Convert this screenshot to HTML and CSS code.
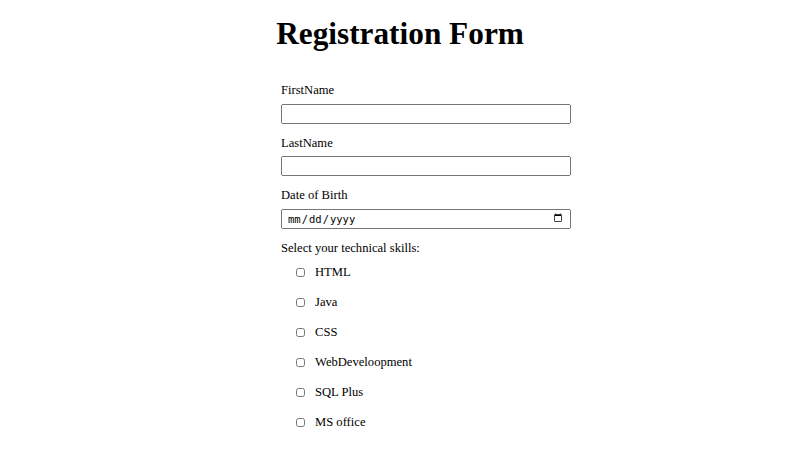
FILE: index.html
```html
<!DOCTYPE html>
<html>
<head>
<meta charset="utf-8">
<title>Registration Form</title>
<link rel="stylesheet" href="styles.css">
</head>
<body>
<h1 class="title">Registration Form</h1>
<form class="form">
  <label class="field-label" for="fn">FirstName</label>
  <input class="field-input" type="text" id="fn">
  <label class="field-label" for="ln">LastName</label>
  <input class="field-input" type="text" id="ln">
  <label class="field-label" for="dob">Date of Birth</label>
  <input class="field-input field-date" type="date" id="dob">
  <p class="skills-title">Select your technical skills:</p>
  <div class="skills">
    <label class="skill"><input type="checkbox" class="skill-box"><span>HTML</span></label>
    <label class="skill"><input type="checkbox" class="skill-box"><span>Java</span></label>
    <label class="skill"><input type="checkbox" class="skill-box"><span>CSS</span></label>
    <label class="skill"><input type="checkbox" class="skill-box"><span>WebDeveloopment</span></label>
    <label class="skill"><input type="checkbox" class="skill-box"><span>SQL Plus</span></label>
    <label class="skill"><input type="checkbox" class="skill-box"><span>MS office</span></label>
  </div>
</form>
</body>
</html>
```
FILE: styles.css
```css
body {
  margin: 0;
  font-family: "Liberation Serif", "Times New Roman", serif;
  font-size: 12.6px;
  line-height: 15px;
  color: #000;
  background: #fff;
}
.title {
  text-align: center;
  font-size: 31.3px;
  line-height: 34px;
  font-weight: bold;
  margin: 17px 0 0;
}
.form {
  display: flex;
  flex-direction: column;
  align-items: flex-start;
  margin: 32px 0 0 281px;
  width: 290px;
}
.field-label {
  display: block;
  margin-bottom: 5.5px;
}
.field-input {
  width: 290px;
  height: 20px;
  box-sizing: border-box;
  margin: 0 0 12px;
  font-size: 10.7px;
  padding: 1px 2px;
}
.field-date {
  font-size: 10.5px;
  padding: 1px 4px;
}
.skills-title {
  margin: 0 0 9px;
}
.skills {
  display: flex;
  flex-direction: column;
  gap: 15px;
  padding-left: 15px;
}
.skill {
  display: flex;
  align-items: center;
  gap: 10px;
  height: 15px;
}
.skill-box {
  width: 9px;
  height: 9px;
  margin: 1px 0 0;
}
```
